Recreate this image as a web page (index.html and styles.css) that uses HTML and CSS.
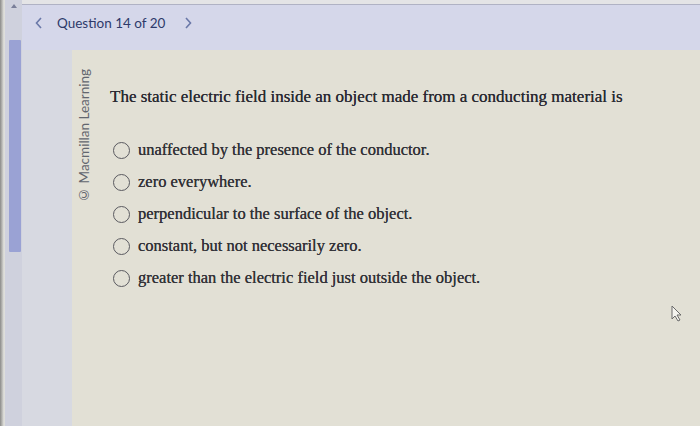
FILE: index.html
```html
<!DOCTYPE html>
<html>
<head>
<meta charset="utf-8">
<link rel="stylesheet" href="styles.css">
</head>
<body>
<div class="screen">
  <div class="edge"></div>
  <div class="scrollbar">
    <div class="scroll-up"></div>
    <div class="thumb"></div>
  </div>
  <div class="main">
    <div class="topline"></div>
    <div class="header">
      <svg class="nav" width="10" height="14" viewBox="0 0 10 14"><path d="M7 2 L2.5 7 L7 12" fill="none" stroke="#6a78a8" stroke-width="1.6"/></svg>
      <span class="title">Question 14 of 20</span>
      <svg class="nav" width="10" height="14" viewBox="0 0 10 14"><path d="M3 2 L7.5 7 L3 12" fill="none" stroke="#6a78a8" stroke-width="1.6"/></svg>
    </div>
    <div class="body">
      <div class="side">
        <div class="credit">© Macmillan Learning</div>
      </div>
      <div class="content">
        <p class="question">The static electric field inside an object made from a conducting material is</p>
        <ul class="options">
          <li><span class="radio"></span>unaffected by the presence of the conductor.</li>
          <li><span class="radio"></span>zero everywhere.</li>
          <li><span class="radio"></span>perpendicular to the surface of the object.</li>
          <li><span class="radio"></span>constant, but not necessarily zero.</li>
          <li><span class="radio"></span>greater than the electric field just outside the object.</li>
        </ul>
        <svg class="cursor" width="14" height="18" viewBox="0 0 14 18">
          <path d="M2 1 L2 14 L5 11 L8 16 L10 15 L7 10 L11 10 Z" fill="#f4f3ee" stroke="#6a6a6a" stroke-width="1"/>
        </svg>
      </div>
    </div>
  </div>
</div>
</body>
</html>
```

FILE: styles.css
```css
html, body {
  margin: 0;
  padding: 0;
}
body {
  width: 700px;
  height: 426px;
  overflow: hidden;
  background: #e2e0d6;
}
.screen {
  display: flex;
  width: 700px;
  height: 426px;
}
.edge {
  width: 5px;
  background: linear-gradient(to right, #8a8a88, #d8d8d4 70%, #e2e2de);
  flex: none;
}
.scrollbar {
  width: 17px;
  flex: none;
  background: #cfd1dd;
  display: flex;
  flex-direction: column;
  align-items: center;
}
.scroll-up {
  width: 0;
  height: 0;
  margin-top: 4px;
  border-left: 3px solid transparent;
  border-right: 3px solid transparent;
  border-bottom: 4px solid #7a7f99;
}
.thumb {
  margin-top: 32px;
  margin-left: 3px;
  width: 12px;
  height: 212px;
  background: #9aa2d4;
  border-radius: 1px;
}
.main {
  flex: 1;
  display: flex;
  flex-direction: column;
}
.topline {
  height: 4px;
  background: #e4e4e6;
  border-bottom: 1px solid #b0b2c4;
}
.header {
  height: 45px;
  background: #d5d7ea;
  display: flex;
  align-items: center;
  font-family: Lato, "Open Sans", sans-serif;
  color: #2e3a6a;
  font-size: 13.5px;
  padding-left: 12px;
  padding-bottom: 10px;
  box-sizing: border-box;
}
.nav {
  flex: none;
}
.title {
  margin-left: 13px;
  margin-right: 18px;
}
.body {
  flex: 1;
  display: flex;
}
.side {
  width: 50px;
  flex: none;
  background: #d7d9e1;
  position: relative;
}
.credit {
  position: absolute;
  z-index: 1;
  left: 54px;
  top: 19px;
  writing-mode: vertical-rl;
  transform: rotate(180deg);
  font-family: Lato, "Open Sans", sans-serif;
  font-size: 13.5px;
  color: #62666e;
  white-space: nowrap;
}
.content {
  flex: 1;
  background: #e2e0d5;
  padding: 37px 0 0 38px;
  position: relative;
  font-family: "Liberation Serif", "Times New Roman", serif;
  color: #2a2a32;
  text-shadow: 0 0 0.3px #2a2a32;
}
.question {
  margin: 0 0 27px 0;
  font-size: 17px;
  line-height: 20px;
}
.options {
  list-style: none;
  margin: 0;
  padding: 0 0 0 3px;
}
.options li {
  display: flex;
  align-items: center;
  height: 32px;
  font-size: 16.5px;
  color: #333338;
}
.radio {
  width: 15px;
  height: 15px;
  border: 1.6px solid #5a5a60;
  border-radius: 50%;
  margin-right: 8px;
  flex: none;
}
.cursor {
  position: absolute;
  left: 598px;
  top: 255px;
}
```
